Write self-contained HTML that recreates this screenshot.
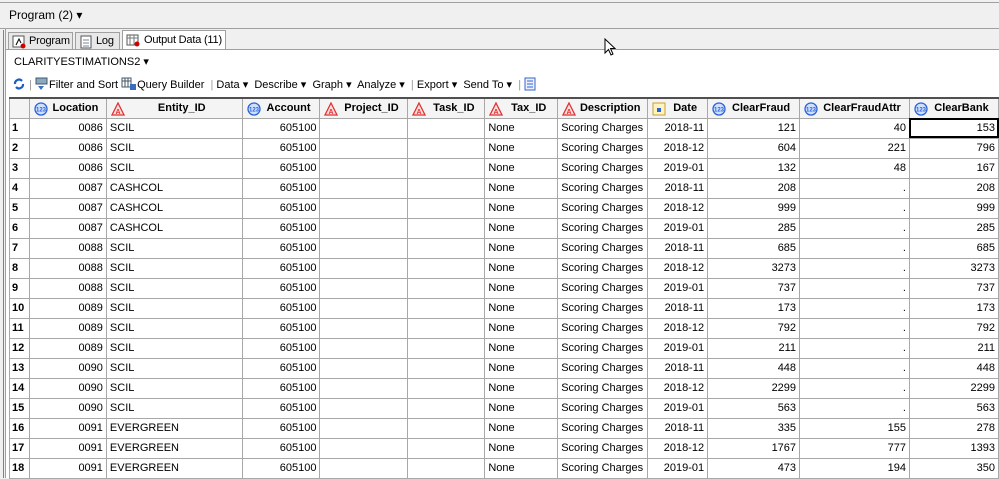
<!DOCTYPE html>
<html><head><meta charset="utf-8">
<style>
*{margin:0;padding:0;box-sizing:border-box}
body{width:999px;height:478px;overflow:hidden;background:#f0f0f0;font-family:"Liberation Sans",Arial,sans-serif;font-size:11px;color:#000;position:relative}
.abs{position:absolute}
.tab{position:absolute;top:32px;height:18px;border:1px solid #a0a0a0;border-bottom:none;background:#e8e8e8;font-size:11px;line-height:17px;padding-left:20px;white-space:nowrap;letter-spacing:-0.2px}
table{position:absolute;left:9px;top:97px;border-collapse:collapse;table-layout:fixed;background:#fff}
td,th{border:1px solid #a8a8a8;height:20px;padding:0 3px;white-space:nowrap;overflow:hidden;font-size:11px}
th{background:#f4f4f4;font-weight:bold;position:relative;text-align:center;border-top:2px solid #505050;padding-left:18px}
td.n{text-align:right}
td.rn{font-weight:bold;background:#fff;padding-left:2px}
.ic{position:absolute;left:4px;top:3px}
</style></head><body>
<div class="abs" style="left:0;top:2px;width:999px;height:1px;background:#a0a0a0"></div>
<div class="abs" style="left:9px;top:8px;font-size:12px">Program (2) &#9662;</div>
<div class="abs" style="left:0;top:28px;width:999px;height:1px;background:#a0a0a0"></div>
<div class="abs" style="left:5px;top:29px;width:1px;height:449px;background:#a0a0a0"></div>
<div class="tab" style="left:8px;width:65px">Program<svg class="abs" style="left:3px;top:2px" width="14" height="14"><rect x="1" y="1" width="11" height="11" fill="#fff" stroke="#555"/><path d="M4 10 L7 4 L9 8" stroke="#000" fill="none"/><circle cx="11" cy="11" r="2.5" fill="#c00"/></svg></div>
<div class="tab" style="left:75px;width:45px">Log<svg class="abs" style="left:3px;top:2px" width="14" height="14"><rect x="2" y="1" width="10" height="12" fill="#fff" stroke="#555"/><path d="M4 5h6M4 8h6M4 11h6" stroke="#789"/></svg></div>
<div class="abs" style="left:122px;top:30px;width:104px;height:20px;border:1px solid #a0a0a0;border-bottom:none;background:#fff;line-height:18px;padding-left:21px;font-size:11px;white-space:nowrap;letter-spacing:-0.2px">Output Data (11)<svg class="abs" style="left:3px;top:2px" width="14" height="14"><rect x="1" y="2" width="11" height="10" fill="#fff" stroke="#555"/><path d="M1 5h11M4 2v10M8 2v10" stroke="#777"/><circle cx="11" cy="11" r="2.5" fill="#c00"/></svg></div>
<div class="abs" style="left:6px;top:49px;width:993px;height:429px;background:#fff;border-top:1px solid #a0a0a0"></div>
<div class="abs" style="left:14px;top:55px;font-size:11px">CLARITYESTIMATIONS2 &#9662;</div>
<div class="abs" style="left:12px;top:77px;font-size:11px;white-space:nowrap;line-height:14px">
<svg width="14" height="14" style="vertical-align:-3px"><path d="M3 7a4 4 0 0 1 7-3M11 7a4 4 0 0 1-7 3" stroke="#1a5cc8" stroke-width="2.2" fill="none"/></svg>
<span style="color:#999">|</span>
<svg width="14" height="14" style="vertical-align:-3px"><rect x="1" y="1" width="11" height="6" fill="#8ab" stroke="#457"/><path d="M3 9l3 4 3-4z" fill="#3a6fc0"/></svg>Filter and Sort
<svg width="16" height="14" style="vertical-align:-3px"><rect x="1" y="1" width="9" height="9" fill="#fff" stroke="#456"/><path d="M1 4h9M4 1v9M7 1v9" stroke="#456"/><rect x="9" y="7" width="6" height="6" fill="#3a6fc0"/></svg>Query Builder
<span style="color:#999">&nbsp;|&nbsp;</span>Data &#9662;&nbsp; Describe &#9662;&nbsp; Graph &#9662;&nbsp; Analyze &#9662;
<span style="color:#999">&nbsp;|&nbsp;</span>Export &#9662;&nbsp; Send To &#9662;
<span style="color:#999">&nbsp;|&nbsp;</span><svg width="12" height="14" style="vertical-align:-3px"><rect x="1" y="1" width="10" height="12" fill="#eef" stroke="#36c"/><path d="M3 4h6M3 7h6M3 10h6" stroke="#36c"/></svg>
</div>
<svg class="abs" style="left:604px;top:38px" width="14" height="20"><path d="M1 1 L1 15 L4.5 11.5 L7 17 L9 16 L6.5 10.5 L11 10.5 Z" fill="#fff" stroke="#000"/></svg>
<div class="abs" style="left:3px;top:30px;width:1px;height:448px;background:#808080"></div>
<table>
<colgroup><col style="width:20px"><col style="width:77px"><col style="width:136px"><col style="width:78px"><col style="width:88px"><col style="width:77px"><col style="width:73px"><col style="width:90px"><col style="width:60px"><col style="width:92px"><col style="width:110px"><col style="width:89px"></colgroup>
<tr><th style="padding:0"></th>
<th><svg class="ic" width="14" height="14"><circle cx="7" cy="7" r="6" fill="#cfe0ff" stroke="#2a63d8" stroke-width="1.3"/><text x="7" y="9.5" font-size="6" text-anchor="middle" fill="#2a63d8" font-family="Liberation Sans">123</text></svg>Location</th>
<th><svg class="ic" width="14" height="14"><path d="M7 1 L13 13 L1 13 Z" fill="#fdd" stroke="#d33" stroke-width="1.3"/><text x="7" y="12" font-size="7" text-anchor="middle" fill="#d33" font-family="Liberation Sans">A</text></svg>Entity_ID</th>
<th><svg class="ic" width="14" height="14"><circle cx="7" cy="7" r="6" fill="#cfe0ff" stroke="#2a63d8" stroke-width="1.3"/><text x="7" y="9.5" font-size="6" text-anchor="middle" fill="#2a63d8" font-family="Liberation Sans">123</text></svg>Account</th>
<th><svg class="ic" width="14" height="14"><path d="M7 1 L13 13 L1 13 Z" fill="#fdd" stroke="#d33" stroke-width="1.3"/><text x="7" y="12" font-size="7" text-anchor="middle" fill="#d33" font-family="Liberation Sans">A</text></svg>Project_ID</th>
<th><svg class="ic" width="14" height="14"><path d="M7 1 L13 13 L1 13 Z" fill="#fdd" stroke="#d33" stroke-width="1.3"/><text x="7" y="12" font-size="7" text-anchor="middle" fill="#d33" font-family="Liberation Sans">A</text></svg>Task_ID</th>
<th><svg class="ic" width="14" height="14"><path d="M7 1 L13 13 L1 13 Z" fill="#fdd" stroke="#d33" stroke-width="1.3"/><text x="7" y="12" font-size="7" text-anchor="middle" fill="#d33" font-family="Liberation Sans">A</text></svg>Tax_ID</th>
<th><svg class="ic" width="14" height="14"><path d="M7 1 L13 13 L1 13 Z" fill="#fdd" stroke="#d33" stroke-width="1.3"/><text x="7" y="12" font-size="7" text-anchor="middle" fill="#d33" font-family="Liberation Sans">A</text></svg>Description</th>
<th><svg class="ic" width="14" height="14"><rect x="1" y="1" width="12" height="12" fill="#fff3c0" stroke="#c9a030"/><rect x="5" y="6" width="4" height="4" fill="#2a63d8"/></svg>Date</th>
<th><svg class="ic" width="14" height="14"><circle cx="7" cy="7" r="6" fill="#cfe0ff" stroke="#2a63d8" stroke-width="1.3"/><text x="7" y="9.5" font-size="6" text-anchor="middle" fill="#2a63d8" font-family="Liberation Sans">123</text></svg>ClearFraud</th>
<th><svg class="ic" width="14" height="14"><circle cx="7" cy="7" r="6" fill="#cfe0ff" stroke="#2a63d8" stroke-width="1.3"/><text x="7" y="9.5" font-size="6" text-anchor="middle" fill="#2a63d8" font-family="Liberation Sans">123</text></svg>ClearFraudAttr</th>
<th><svg class="ic" width="14" height="14"><circle cx="7" cy="7" r="6" fill="#cfe0ff" stroke="#2a63d8" stroke-width="1.3"/><text x="7" y="9.5" font-size="6" text-anchor="middle" fill="#2a63d8" font-family="Liberation Sans">123</text></svg>ClearBank</th>
</tr>
<tr><td class="rn">1</td><td class="n">0086</td><td>SCIL</td><td class="n">605100</td><td></td><td></td><td>None</td><td>Scoring Charges</td><td class="n">2018-11</td><td class="n">121</td><td class="n">40</td><td class="n" style="outline:2px solid #000;outline-offset:-2px">153</td></tr>
<tr><td class="rn">2</td><td class="n">0086</td><td>SCIL</td><td class="n">605100</td><td></td><td></td><td>None</td><td>Scoring Charges</td><td class="n">2018-12</td><td class="n">604</td><td class="n">221</td><td class="n">796</td></tr>
<tr><td class="rn">3</td><td class="n">0086</td><td>SCIL</td><td class="n">605100</td><td></td><td></td><td>None</td><td>Scoring Charges</td><td class="n">2019-01</td><td class="n">132</td><td class="n">48</td><td class="n">167</td></tr>
<tr><td class="rn">4</td><td class="n">0087</td><td>CASHCOL</td><td class="n">605100</td><td></td><td></td><td>None</td><td>Scoring Charges</td><td class="n">2018-11</td><td class="n">208</td><td class="n">.</td><td class="n">208</td></tr>
<tr><td class="rn">5</td><td class="n">0087</td><td>CASHCOL</td><td class="n">605100</td><td></td><td></td><td>None</td><td>Scoring Charges</td><td class="n">2018-12</td><td class="n">999</td><td class="n">.</td><td class="n">999</td></tr>
<tr><td class="rn">6</td><td class="n">0087</td><td>CASHCOL</td><td class="n">605100</td><td></td><td></td><td>None</td><td>Scoring Charges</td><td class="n">2019-01</td><td class="n">285</td><td class="n">.</td><td class="n">285</td></tr>
<tr><td class="rn">7</td><td class="n">0088</td><td>SCIL</td><td class="n">605100</td><td></td><td></td><td>None</td><td>Scoring Charges</td><td class="n">2018-11</td><td class="n">685</td><td class="n">.</td><td class="n">685</td></tr>
<tr><td class="rn">8</td><td class="n">0088</td><td>SCIL</td><td class="n">605100</td><td></td><td></td><td>None</td><td>Scoring Charges</td><td class="n">2018-12</td><td class="n">3273</td><td class="n">.</td><td class="n">3273</td></tr>
<tr><td class="rn">9</td><td class="n">0088</td><td>SCIL</td><td class="n">605100</td><td></td><td></td><td>None</td><td>Scoring Charges</td><td class="n">2019-01</td><td class="n">737</td><td class="n">.</td><td class="n">737</td></tr>
<tr><td class="rn">10</td><td class="n">0089</td><td>SCIL</td><td class="n">605100</td><td></td><td></td><td>None</td><td>Scoring Charges</td><td class="n">2018-11</td><td class="n">173</td><td class="n">.</td><td class="n">173</td></tr>
<tr><td class="rn">11</td><td class="n">0089</td><td>SCIL</td><td class="n">605100</td><td></td><td></td><td>None</td><td>Scoring Charges</td><td class="n">2018-12</td><td class="n">792</td><td class="n">.</td><td class="n">792</td></tr>
<tr><td class="rn">12</td><td class="n">0089</td><td>SCIL</td><td class="n">605100</td><td></td><td></td><td>None</td><td>Scoring Charges</td><td class="n">2019-01</td><td class="n">211</td><td class="n">.</td><td class="n">211</td></tr>
<tr><td class="rn">13</td><td class="n">0090</td><td>SCIL</td><td class="n">605100</td><td></td><td></td><td>None</td><td>Scoring Charges</td><td class="n">2018-11</td><td class="n">448</td><td class="n">.</td><td class="n">448</td></tr>
<tr><td class="rn">14</td><td class="n">0090</td><td>SCIL</td><td class="n">605100</td><td></td><td></td><td>None</td><td>Scoring Charges</td><td class="n">2018-12</td><td class="n">2299</td><td class="n">.</td><td class="n">2299</td></tr>
<tr><td class="rn">15</td><td class="n">0090</td><td>SCIL</td><td class="n">605100</td><td></td><td></td><td>None</td><td>Scoring Charges</td><td class="n">2019-01</td><td class="n">563</td><td class="n">.</td><td class="n">563</td></tr>
<tr><td class="rn">16</td><td class="n">0091</td><td>EVERGREEN</td><td class="n">605100</td><td></td><td></td><td>None</td><td>Scoring Charges</td><td class="n">2018-11</td><td class="n">335</td><td class="n">155</td><td class="n">278</td></tr>
<tr><td class="rn">17</td><td class="n">0091</td><td>EVERGREEN</td><td class="n">605100</td><td></td><td></td><td>None</td><td>Scoring Charges</td><td class="n">2018-12</td><td class="n">1767</td><td class="n">777</td><td class="n">1393</td></tr>
<tr><td class="rn">18</td><td class="n">0091</td><td>EVERGREEN</td><td class="n">605100</td><td></td><td></td><td>None</td><td>Scoring Charges</td><td class="n">2019-01</td><td class="n">473</td><td class="n">194</td><td class="n">350</td></tr>
</table>
</body></html>
